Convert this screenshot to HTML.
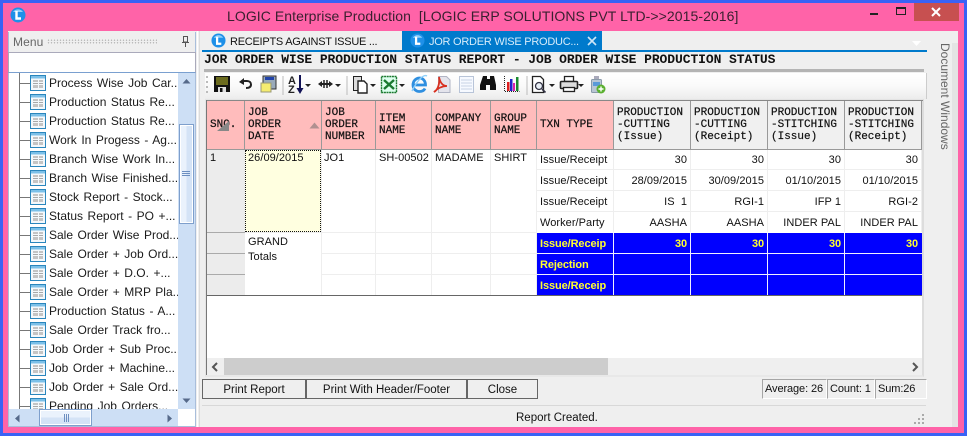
<!DOCTYPE html>
<html><head><meta charset="utf-8">
<style>
*{box-sizing:border-box}
html,body{margin:0;padding:0}
body{width:967px;height:436px;overflow:hidden;position:relative;background:#ff63a8;font-family:"Liberation Sans",sans-serif;font-size:12px;color:#111}
.a{position:absolute}
.t{position:absolute;white-space:pre;line-height:14px}
.tr{position:absolute;left:49px;white-space:pre;line-height:14px;font-size:12px;word-spacing:1.2px;color:#1a1a1a}
.ti{position:absolute;left:30px;width:16px;height:16px}
.tl{position:absolute;left:19px;width:11px;height:1px;background:#777}
.h{position:absolute;top:101px;height:48px;background:#ffbcbc;border-right:1px solid #999;font-family:"Liberation Mono",monospace;font-size:11px;line-height:12px;color:#111;-webkit-text-stroke:.2px #111;display:flex;align-items:center;padding-left:3px;white-space:pre}
.p{background:#f0f0f0;padding-left:3px}
.c{position:absolute;white-space:pre;line-height:14px;font-size:11px;letter-spacing:.05px;color:#111}
.r{text-align:right;width:73px}
.s{margin-top:1px}
.by{position:absolute;white-space:pre;line-height:14px;font-size:11px;font-weight:bold;letter-spacing:-.1px;color:#ffff30;margin-top:1px}
.vl{position:absolute;width:1px;background:#eee}
.hl{position:absolute;height:1px;background:#eee}
.btn{position:absolute;top:379px;height:20px;background:#efefef;border:1px solid #666;text-align:center;line-height:20px;font-size:11.5px;color:#111}
.st{position:absolute;top:379px;height:20px;border:1px solid #a5a5a5;border-right-color:#fff;border-bottom-color:#fff;line-height:18px;padding-left:2px;font-size:11px;letter-spacing:-.1px;color:#111;white-space:pre}
</style></head>
<body>
<svg width="0" height="0" style="position:absolute"><defs>
<symbol id="ti" viewBox="0 0 16 16"><rect x=".5" y=".5" width="15" height="15" fill="#f4f8fb" stroke="#2a86bd"/><rect x="1" y="1" width="14" height="2.500" fill="#7cc0e8"/><rect x="3" y="5" width="5" height="2" fill="#c4c4c4"/><rect x="9" y="5" width="4" height="2" fill="#c4c4c4"/><rect x="3" y="8" width="5" height="1" fill="#a8a8a8"/><rect x="9" y="8" width="4" height="1" fill="#a8a8a8"/><rect x="3" y="10" width="5" height="3" fill="#c4c4c4"/><rect x="9" y="10" width="4" height="3" fill="#c4c4c4"/></symbol>
<symbol id="lg" viewBox="0 0 16 16"><circle cx="8" cy="8" r="7.500" fill="#1e90e8"/><path d="M3 5a6 6 0 0 1 10 0z" fill="#8fd0fa"/><path d="M6.500 4v7.500h4.500" fill="none" stroke="#fff" stroke-width="2.400"/></symbol>
</defs></svg>

<!-- window frame -->
<div class="a" style="left:0;top:0;width:967px;height:3px;background:#3a62f5"></div>
<div class="a" style="left:0;top:433px;width:967px;height:3px;background:#3a62f5"></div>
<div class="a" style="left:0;top:0;width:3px;height:436px;background:#3a62f5"></div>
<div class="a" style="left:964px;top:0;width:3px;height:436px;background:#3a62f5"></div>
<svg class="a" style="left:10px;top:7px" width="16" height="16"><use href="#lg"/></svg>
<div class="t" style="left:227px;top:7px;font-size:14px;line-height:18px;color:#3a2030;letter-spacing:.07px">LOGIC Enterprise Production  [LOGIC ERP SOLUTIONS PVT LTD-&gt;&gt;2015-2016]</div>
<div class="a" style="left:870px;top:13px;width:8px;height:2px;background:#222"></div>
<div class="a" style="left:896px;top:7px;width:10px;height:8px;border:1px solid #222;border-top-width:2px"></div>
<div class="a" style="left:914px;top:3px;width:45px;height:18px;background:#c75050"></div>
<svg class="a" style="left:931px;top:7px" width="10" height="10"><path d="M1 1l8 8M9 1l-8 8" stroke="#fff" stroke-width="2"/></svg>

<!-- inner -->
<div class="a" style="left:8px;top:31px;width:950px;height:396px;background:#efefef"></div>

<!-- left panel -->
<div class="a" style="left:8px;top:32px;width:188px;height:395px;border:1px solid #a9bedb;border-top:0;background:#fff"></div>
<div class="a" style="left:9px;top:32px;width:186px;height:20px;background:#efefef"></div>
<div class="t" style="left:13px;top:35px;font-size:12px;color:#666;letter-spacing:.1px">Menu</div>
<div class="a" style="left:47px;top:39px;width:110px;height:5px;background-image:radial-gradient(#bbb .7px,transparent .8px);background-size:3px 2.500px"></div>
<svg class="a" style="left:181px;top:36px" width="9" height="11"><path d="M2.500 .5h4v5.500h-4zM1 6.500h7M4.500 7v4" fill="none" stroke="#555"/></svg>
<div class="a" style="left:8px;top:52px;width:188px;height:21px;background:#fff;border:1px solid #aab;border-bottom-color:#7aa0d0"></div>

<div class="a" style="left:19px;top:73px;width:1px;height:336px;background:#777"></div>
<div class="tl" style="top:83px"></div><svg class="ti" style="top:75px"><use href="#ti"/></svg><div class="tr" style="top:76px">Process Wise Job Car...</div>
<div class="tl" style="top:102px"></div><svg class="ti" style="top:94px"><use href="#ti"/></svg><div class="tr" style="top:95px">Production Status Re...</div>
<div class="tl" style="top:121px"></div><svg class="ti" style="top:113px"><use href="#ti"/></svg><div class="tr" style="top:114px">Production Status Re...</div>
<div class="tl" style="top:140px"></div><svg class="ti" style="top:132px"><use href="#ti"/></svg><div class="tr" style="top:133px">Work In Progess - Ag...</div>
<div class="tl" style="top:159px"></div><svg class="ti" style="top:151px"><use href="#ti"/></svg><div class="tr" style="top:152px">Branch Wise Work In...</div>
<div class="tl" style="top:178px"></div><svg class="ti" style="top:170px"><use href="#ti"/></svg><div class="tr" style="top:171px">Branch Wise Finished...</div>
<div class="tl" style="top:197px"></div><svg class="ti" style="top:189px"><use href="#ti"/></svg><div class="tr" style="top:190px">Stock Report - Stock...</div>
<div class="tl" style="top:216px"></div><svg class="ti" style="top:208px"><use href="#ti"/></svg><div class="tr" style="top:209px">Status Report - PO +...</div>
<div class="tl" style="top:235px"></div><svg class="ti" style="top:227px"><use href="#ti"/></svg><div class="tr" style="top:228px">Sale Order Wise Prod...</div>
<div class="tl" style="top:254px"></div><svg class="ti" style="top:246px"><use href="#ti"/></svg><div class="tr" style="top:247px">Sale Order + Job Ord...</div>
<div class="tl" style="top:273px"></div><svg class="ti" style="top:265px"><use href="#ti"/></svg><div class="tr" style="top:266px">Sale Order + D.O. +...</div>
<div class="tl" style="top:292px"></div><svg class="ti" style="top:284px"><use href="#ti"/></svg><div class="tr" style="top:285px">Sale Order + MRP Pla...</div>
<div class="tl" style="top:311px"></div><svg class="ti" style="top:303px"><use href="#ti"/></svg><div class="tr" style="top:304px">Production Status - A...</div>
<div class="tl" style="top:330px"></div><svg class="ti" style="top:322px"><use href="#ti"/></svg><div class="tr" style="top:323px">Sale Order Track fro...</div>
<div class="tl" style="top:349px"></div><svg class="ti" style="top:341px"><use href="#ti"/></svg><div class="tr" style="top:342px">Job Order + Sub Proc...</div>
<div class="tl" style="top:368px"></div><svg class="ti" style="top:360px"><use href="#ti"/></svg><div class="tr" style="top:361px">Job Order + Machine...</div>
<div class="tl" style="top:387px"></div><svg class="ti" style="top:379px"><use href="#ti"/></svg><div class="tr" style="top:380px">Job Order + Sale Ord...</div>
<div class="tl" style="top:406px"></div><svg class="ti" style="top:398px"><use href="#ti"/></svg><div class="tr" style="top:399px;height:10px;overflow:hidden">Pending Job Orders...</div>

<!-- left v scrollbar -->
<div class="a" style="left:178px;top:73px;width:17px;height:336px;background:#cddff5"></div>
<div class="a" style="left:179px;top:124px;width:15px;height:100px;background:linear-gradient(90deg,#eaf2fc 50%,#d4e3f6 50%);border:1px solid #7e9fcc;box-shadow:inset 0 0 0 1px #fff"></div>
<div class="a" style="left:182px;top:171px;width:8px;height:1px;background:#6d8fc0;box-shadow:0 2px 0 #6d8fc0,0 4px 0 #6d8fc0"></div>
<svg class="a" style="left:182px;top:78px" width="9" height="6"><path d="M.5 5.500L4.500 1l4 4.500z" fill="#566a8a"/></svg>
<svg class="a" style="left:182px;top:398px" width="9" height="6"><path d="M.5 .5L4.500 5l4-4.500z" fill="#566a8a"/></svg>
<!-- left h scrollbar -->
<div class="a" style="left:9px;top:409px;width:169px;height:17px;background:#cddff5"></div>
<div class="a" style="left:39px;top:409px;width:53px;height:17px;background:linear-gradient(#eaf2fc 50%,#d4e3f6 50%);border:1px solid #7e9fcc;box-shadow:inset 0 0 0 1px #fff"></div>
<div class="a" style="left:64px;top:414px;width:1px;height:8px;background:#6d8fc0;box-shadow:2px 0 0 #6d8fc0,4px 0 0 #6d8fc0"></div>
<svg class="a" style="left:14px;top:414px" width="6" height="9"><path d="M5.500 .5L1 4.500l4.500 4z" fill="#566a8a"/></svg>
<svg class="a" style="left:167px;top:414px" width="6" height="9"><path d="M.5 .5L5 4.500l-4.500 4z" fill="#566a8a"/></svg>

<div class="a" style="left:197px;top:31px;width:1px;height:396px;background:#fff"></div>
<div class="a" style="left:199px;top:31px;width:1px;height:396px;background:#dcdcdc"></div>

<!-- tabs -->
<svg class="a" style="left:211px;top:33px" width="15" height="15"><use href="#lg"/></svg>
<div class="t" style="left:230px;top:35px;font-size:11px;letter-spacing:-.25px;color:#111">RECEIPTS AGAINST ISSUE ...</div>
<div class="a" style="left:402px;top:31px;width:200px;height:20px;background:#007acc"></div>
<svg class="a" style="left:410px;top:33px" width="15" height="15"><use href="#lg"/></svg>
<div class="t" style="left:429px;top:35px;font-size:11px;letter-spacing:-.25px;color:#d6ecfa">JOR ORDER WISE PRODUC...</div>
<svg class="a" style="left:587px;top:36px" width="10" height="10"><path d="M1 1l8 8M9 1l-8 8" stroke="#cde6f7" stroke-width="1.600"/></svg>
<div class="a" style="left:202px;top:50px;width:725px;height:2px;background:#007acc"></div>
<svg class="a" style="left:912px;top:41px" width="9" height="5"><path d="M0 0h9L4.500 5z" fill="#fff"/></svg>

<!-- report title -->
<div class="t" style="left:204px;top:53px;font-family:'Liberation Mono',monospace;font-weight:bold;font-size:13px;letter-spacing:-.08px;color:#111">JOR ORDER WISE PRODUCTION STATUS REPORT - JOB ORDER WISE PRODUCTION STATUS</div>
<div class="a" style="left:204px;top:69px;width:720px;height:3px;background:#b4b4b4"></div>

<!-- toolbar -->
<div class="a" style="left:205px;top:73px;width:722px;height:26px;background:linear-gradient(#fff,#fafafa 50%,#ececec);border-right:1px solid #ccc"></div>
<svg class="a" style="left:205px;top:72px" width="420" height="28" viewBox="0 0 420 28">
<g fill="#bbb"><rect x="1" y="4" width="2" height="2"/><rect x="1" y="9" width="2" height="2"/><rect x="1" y="14" width="2" height="2"/><rect x="1" y="19" width="2" height="2"/></g>
<!-- save -->
<rect x="9" y="4" width="16" height="16" fill="#111"/><rect x="11" y="5" width="12" height="8" fill="#6b6b1e"/><rect x="13" y="15" width="8" height="5" fill="#ddd"/><rect x="15" y="16" width="2.500" height="4" fill="#111"/>
<!-- undo -->
<path d="M41 16c3.500 0 5-1.500 5-3.500S44.500 9 42 9h-4" fill="none" stroke="#222" stroke-width="2"/><path d="M34 10l5-4v7z" fill="#222"/>
<!-- db -->
<rect x="58" y="4" width="13" height="13" fill="#9ab" stroke="#333"/><rect x="60" y="5" width="9" height="3" fill="#24a"/><rect x="56" y="11" width="10" height="9" fill="#f5ec70" stroke="#997"/>
<line x1="78" y1="4" x2="78" y2="23" stroke="#bbb"/>
<!-- sort -->
<text x="83" y="12" font-family="Liberation Sans" font-size="11" font-weight="bold" fill="#222">A</text><text x="83" y="21" font-family="Liberation Sans" font-size="11" font-weight="bold" fill="#222">Z</text>
<path d="M95 3v16" stroke="#115" stroke-width="2"/><path d="M91.500 16h7L95 22z" fill="#115"/><path d="M100 12h6l-3 3z" fill="#222"/>
<!-- columns -->
<path d="M115 12h11" stroke="#222" stroke-width="2"/><path d="M113 12l4-3v6zM128 12l-4-3v6z" fill="#222"/><path d="M119 8v8M122 8v8" stroke="#222" stroke-width="1.500"/><path d="M130 12h6l-3 3z" fill="#222"/>
<line x1="142" y1="4" x2="142" y2="23" stroke="#bbb"/>
<!-- copy -->
<path d="M148.500 4.500h8v14h-8z" fill="#ddd" stroke="#222"/><path d="M153 9h6l3 3v9h-9z" fill="#fff" stroke="#222" stroke-width="1.400"/><path d="M165 12h6l-3 3z" fill="#222"/>
<!-- excel -->
<rect x="176.500" y="4.500" width="15" height="16" fill="#dfe" stroke="#1a7a30" stroke-width="1.400" stroke-dasharray="2 .6"/><path d="M179 8l10 9M189 8l-10 9" stroke="#1a7a30" stroke-width="2.400"/><path d="M194 12h6l-3 3z" fill="#222"/>
<!-- ie -->
<path d="M208 13h12.500c0-4-2.500-7-6-7s-6.500 3-6.500 7 3 6.500 6.500 6.500c2.500 0 4.500-1 5.500-3" fill="none" stroke="#2f8fe0" stroke-width="2.800"/><path d="M222 4c-3-2-9 3-15 15" fill="none" stroke="#8fd0fa" stroke-width="1.400"/>
<!-- pdf -->
<path d="M233.500 4.500h8l3.500 3.500v12.500h-11.500z" fill="#e4e4ec" stroke="#b0b4c4"/><path d="M229 20c4-2 6-9 5-15 1 5 3 9 8 9-5 0-9 2-13 6z" fill="none" stroke="#d83020" stroke-width="1.800"/>
<!-- doc -->
<rect x="254.500" y="4.500" width="14" height="16" fill="#f6f9ff" stroke="#b8c4d8"/><path d="M256 8h11M256 11h11M256 14h11M256 17h11" stroke="#c8d4e6"/>
<!-- binoculars -->
<path d="M278 4h4v3h3V4h4l2 9v5h-6v-5h-4v5h-6v-5z" fill="#111"/>
<!-- chart -->
<path d="M299.500 4v15.500h15" fill="none" stroke="#222" stroke-dasharray="1 1"/><rect x="302" y="10" width="2.500" height="9" fill="#d22"/><rect x="305" y="7" width="2.500" height="12" fill="#22c"/><rect x="308" y="11" width="2" height="8" fill="#d2a"/><rect x="311" y="5" width="2.500" height="14" fill="#1a8a30"/>
<line x1="322" y1="4" x2="322" y2="23" stroke="#bbb"/>
<!-- preview -->
<path d="M327.500 4.500h8l3 3v13h-11z" fill="#fff" stroke="#222" stroke-width="1.300"/><circle cx="334" cy="14" r="3.500" fill="#e8eef5" stroke="#334" stroke-width="1.300"/><path d="M337 17l3.500 3.500" stroke="#334" stroke-width="1.600"/><path d="M344 12h6l-3 3z" fill="#222"/>
<!-- printer -->
<path d="M359.500 4.500h9v5h-9z" fill="#fff" stroke="#222" stroke-width="1.300"/><rect x="355.500" y="9.500" width="17" height="7" rx="1" fill="#ddd" stroke="#222" stroke-width="1.600"/><rect x="358.500" y="15.500" width="11" height="4" fill="#fff" stroke="#222" stroke-width="1.300"/><path d="M373 12h6l-3 3z" fill="#222"/>
<!-- add -->
<rect x="386.500" y="7.500" width="10" height="13" rx="1" fill="#b9c6d4" stroke="#8a9aaa"/><rect x="388" y="10" width="7" height="4" fill="#5a9ad8"/><rect x="389" y="4" width="5" height="3" fill="#aab"/><circle cx="396" cy="17" r="4.500" fill="#5bb030"/><path d="M393.500 17h5M396 14.500v5" stroke="#fff" stroke-width="1.400"/>
</svg>

<!-- grid -->
<div class="a" style="left:205px;top:99px;width:719px;height:278px;background:#fff;border:1px solid #e4e4e4;border-right:2px solid #ddd;border-bottom:2px solid #e8e8e8"></div>
<div class="a" style="left:206px;top:100px;width:717px;height:1px;background:#888"></div>
<div class="a" style="left:206px;top:100px;width:1px;height:275px;background:#777"></div>
<div class="a" style="left:207px;top:149px;width:715px;height:1px;background:#999"></div>
<div class="a" style="left:207px;top:295px;width:715px;height:1px;background:#666"></div>

<div class="h" style="left:207px;width:38px">SNO.</div>
<svg class="a" style="left:216px;top:120px" width="16" height="12"><path d="M1 11L13 1v10z" fill="#888"/></svg>
<div class="h" style="left:245px;width:77px">JOB
ORDER
DATE</div>
<svg class="a" style="left:309px;top:122px" width="11" height="7"><path d="M.5 6.500L5.500 .5l5 6z" fill="#b09090"/></svg>
<div class="h" style="left:322px;width:54px">JOB
ORDER
NUMBER</div>
<div class="h" style="left:376px;width:56px">ITEM
NAME</div>
<div class="h" style="left:432px;width:59px">COMPANY
NAME</div>
<div class="h" style="left:491px;width:46px">GROUP
NAME</div>
<div class="h" style="left:537px;width:77px">TXN TYPE</div>
<div class="h p" style="left:614px;width:77px">PRODUCTION
-CUTTING
(Issue)</div>
<div class="h p" style="left:691px;width:77px">PRODUCTION
-CUTTING
(Receipt)</div>
<div class="h p" style="left:768px;width:77px">PRODUCTION
-STITCHING
(Issue)</div>
<div class="h p" style="left:845px;width:77px;border-right:1px solid #999">PRODUCTION
-STITCHING
(Receipt)</div>

<!-- row headers -->
<div class="a" style="left:207px;top:150px;width:38px;height:145px;background:#ececec"></div>
<div class="a" style="left:207px;top:232px;width:38px;height:1px;background:#aaa"></div>
<div class="a" style="left:207px;top:253px;width:38px;height:1px;background:#aaa"></div>
<div class="a" style="left:207px;top:274px;width:38px;height:1px;background:#aaa"></div>

<!-- cell lines -->
<div class="vl" style="left:321px;top:150px;height:145px"></div>
<div class="vl" style="left:375px;top:150px;height:145px"></div>
<div class="vl" style="left:431px;top:150px;height:145px"></div>
<div class="vl" style="left:490px;top:150px;height:145px"></div>
<div class="vl" style="left:536px;top:150px;height:145px"></div>
<div class="vl" style="left:613px;top:150px;height:82px"></div>
<div class="vl" style="left:690px;top:150px;height:82px"></div>
<div class="vl" style="left:767px;top:150px;height:82px"></div>
<div class="vl" style="left:844px;top:150px;height:82px"></div>
<div class="vl" style="left:921px;top:150px;height:82px"></div>
<div class="hl" style="left:537px;top:169px;width:385px"></div>
<div class="hl" style="left:537px;top:190px;width:385px"></div>
<div class="hl" style="left:537px;top:211px;width:385px"></div>
<div class="hl" style="left:245px;top:232px;width:292px"></div>
<div class="hl" style="left:322px;top:253px;width:215px"></div>
<div class="hl" style="left:322px;top:274px;width:215px"></div>

<!-- selected cell -->
<div class="a" style="left:245px;top:150px;width:76px;height:82px;background:#ffffe0;border:1px dotted #111"></div>

<div class="c" style="left:210px;top:151px">1</div>
<div class="c" style="left:248px;top:151px">26/09/2015</div>
<div class="c" style="left:324px;top:151px">JO1</div>
<div class="c" style="left:379px;top:151px">SH-00502</div>
<div class="c" style="left:435px;top:151px">MADAME</div>
<div class="c" style="left:494px;top:151px">SHIRT</div>
<div class="c" style="left:248px;top:235px">GRAND</div>
<div class="c" style="left:248px;top:250px">Totals</div>

<div class="c s" style="left:540px;top:152px">Issue/Receipt</div>
<div class="c s" style="left:540px;top:173px">Issue/Receipt</div>
<div class="c s" style="left:540px;top:194px">Issue/Receipt</div>
<div class="c s" style="left:540px;top:215px">Worker/Party</div>

<div class="c r s" style="left:614px;top:152px">30</div>
<div class="c r s" style="left:691px;top:152px">30</div>
<div class="c r s" style="left:768px;top:152px">30</div>
<div class="c r s" style="left:845px;top:152px">30</div>
<div class="c r s" style="left:614px;top:173px">28/09/2015</div>
<div class="c r s" style="left:691px;top:173px">30/09/2015</div>
<div class="c r s" style="left:768px;top:173px">01/10/2015</div>
<div class="c r s" style="left:845px;top:173px">01/10/2015</div>
<div class="c r s" style="left:614px;top:194px">IS  1</div>
<div class="c r s" style="left:691px;top:194px">RGI-1</div>
<div class="c r s" style="left:768px;top:194px">IFP 1</div>
<div class="c r s" style="left:845px;top:194px">RGI-2</div>
<div class="c r s" style="left:614px;top:215px">AASHA</div>
<div class="c r s" style="left:691px;top:215px">AASHA</div>
<div class="c r s" style="left:768px;top:215px">INDER PAL</div>
<div class="c r s" style="left:845px;top:215px">INDER PAL</div>

<!-- blue totals -->
<div class="a" style="left:537px;top:233px;width:385px;height:62px;background:#0000ff"></div>
<div class="a" style="left:537px;top:253px;width:385px;height:1px;background:#eef"></div>
<div class="a" style="left:537px;top:274px;width:385px;height:1px;background:#eef"></div>
<div class="a" style="left:613px;top:233px;width:1px;height:62px;background:#eef"></div>
<div class="a" style="left:690px;top:233px;width:1px;height:62px;background:#eef"></div>
<div class="a" style="left:767px;top:233px;width:1px;height:62px;background:#eef"></div>
<div class="a" style="left:844px;top:233px;width:1px;height:62px;background:#eef"></div>
<div class="by" style="left:540px;top:236px">Issue/Receip</div>
<div class="by" style="left:540px;top:257px">Rejection</div>
<div class="by" style="left:540px;top:278px">Issue/Receip</div>
<div class="by r" style="left:614px;top:236px">30</div>
<div class="by r" style="left:691px;top:236px">30</div>
<div class="by r" style="left:768px;top:236px">30</div>
<div class="by r" style="left:845px;top:236px">30</div>

<!-- grid h scrollbar -->
<div class="a" style="left:207px;top:358px;width:715px;height:17px;background:#efefef"></div>
<div class="a" style="left:224px;top:358px;width:384px;height:17px;background:#cdcdcd"></div>
<svg class="a" style="left:211px;top:362px" width="8" height="10"><path d="M6 1L2 5l4 4" fill="none" stroke="#555" stroke-width="2"/></svg>
<svg class="a" style="left:911px;top:362px" width="8" height="10"><path d="M2 1l4 4-4 4" fill="none" stroke="#555" stroke-width="2"/></svg>

<!-- buttons -->
<div class="btn" style="left:202px;width:104px">Print Report</div>
<div class="btn" style="left:306px;width:161px">Print With Header/Footer</div>
<div class="btn" style="left:467px;width:71px">Close</div>
<div class="st" style="left:762px;width:65px">Average: 26</div>
<div class="st" style="left:827px;width:48px">Count: 1</div>
<div class="st" style="left:875px;width:52px">Sum:26</div>

<!-- status bar -->
<div class="a" style="left:202px;top:405px;width:724px;height:1px;background:#d8d8d8"></div>
<div class="t" style="left:516px;top:411px;font-size:11.5px;color:#111">Report Created.</div>
<svg class="a" style="left:913px;top:413px" width="12" height="12"><g fill="#aaa"><rect x="9" y="1" width="2" height="2"/><rect x="5" y="5" width="2" height="2"/><rect x="9" y="5" width="2" height="2"/><rect x="1" y="9" width="2" height="2"/><rect x="5" y="9" width="2" height="2"/><rect x="9" y="9" width="2" height="2"/></g></svg>

<!-- document windows -->
<div class="a" style="left:934px;top:31px;width:24px;height:396px;background:#efefef"></div>
<div class="a" style="left:952px;top:43px;width:6px;height:384px;background:#e4e4e4"></div>
<div class="t" style="left:938px;top:43px;writing-mode:vertical-rl;font-size:12px;color:#666;line-height:14px">Document Windows</div>
</body></html>
